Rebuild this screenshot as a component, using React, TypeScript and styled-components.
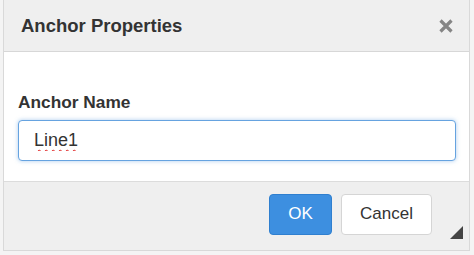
import React, { FC, useState } from "react";
import styled, { createGlobalStyle } from "styled-components";

const GlobalStyle = createGlobalStyle`
  html, body {
    margin: 0;
    padding: 0;
    background: #f4f4f4;
  }
  body {
    font-family: "Liberation Sans", Arial, sans-serif;
  }
`;

const Dialog = styled.div`
  width: 467px;
  height: 251px;
  margin-left: 3px;
  border: 1px solid #d9d9d9;
  border-top: none;
  box-sizing: border-box;
  display: flex;
  flex-direction: column;
  background: #fff;
`;

const Header = styled.div`
  height: 50px;
  flex-shrink: 0;
  display: flex;
  align-items: center;
  justify-content: space-between;
  padding: 1px 14px 0 17px;
  background: #efefef;
  border-bottom: 1px solid #d7d7d7;
`;

const Title = styled.h3`
  margin: 0;
  font-size: 18.5px;
  font-weight: bold;
  color: #333;
`;

const CloseButton = styled.button`
  border: none;
  background: none;
  padding: 0;
  width: 18px;
  height: 18px;
  display: flex;
  align-items: center;
  justify-content: center;
  cursor: pointer;
`;

const Body = styled.div`
  flex: 1;
  padding: 40px 13px 0 14px;
  background: #fff;
`;

const Label = styled.label`
  display: block;
  font-size: 17.3px;
  font-weight: bold;
  color: #333;
  margin-bottom: 7px;
`;

const Input = styled.input`
  display: block;
  width: 100%;
  height: 41px;
  box-sizing: border-box;
  border: 1px solid #66a3e0;
  border-radius: 4px;
  box-shadow: 0 0 4px rgba(102, 163, 224, 0.55);
  padding: 0 15px;
  font-family: "Liberation Sans", Arial, sans-serif;
  font-size: 18px;
  color: #333;
  outline: none;
  text-decoration: underline wavy #e02020;
  text-decoration-thickness: 1px;
  text-underline-offset: 3px;
`;

const Footer = styled.div`
  height: 64px;
  flex-shrink: 0;
  display: flex;
  align-items: center;
  justify-content: flex-end;
  gap: 9px;
  padding: 0 37px 4px 0;
  background: #efefef;
  border-top: 1px solid #dcdcdc;
  position: relative;
`;

const Button = styled.button<{ $primary?: boolean }>`
  height: 41px;
  padding: 0 18px;
  border-radius: 4px;
  font-family: "Liberation Sans", Arial, sans-serif;
  font-size: 17px;
  cursor: pointer;
  border: 1px solid ${p => (p.$primary ? "#2f7fcf" : "#d5d5d5")};
  background: ${p => (p.$primary ? "#3d8fe0" : "#fff")};
  color: ${p => (p.$primary ? "#fff" : "#333")};
  min-width: ${p => (p.$primary ? "63px" : "90px")};
`;

const ResizeGrip = styled.div`
  position: absolute;
  right: 6px;
  bottom: 11px;
  width: 0;
  height: 0;
  border-left: 13px solid transparent;
  border-bottom: 13px solid #444;
`;

const App: FC = () => {
  const [name, setName] = useState("Line1");

  return (
    <>
      <GlobalStyle />
      <Dialog>
        <Header>
          <Title>Anchor Properties</Title>
          <CloseButton aria-label="Close">
            <svg width="16" height="16" viewBox="0 0 16 16">
              <path
                d="M2.5 2.5 L13.5 13.5 M13.5 2.5 L2.5 13.5"
                stroke="#858585"
                strokeWidth="3.2"
                strokeLinecap="butt"
              />
            </svg>
          </CloseButton>
        </Header>
        <Body>
          <Label htmlFor="anchor-name">Anchor Name</Label>
          <Input
            id="anchor-name"
            value={name}
            onChange={e => setName(e.target.value)}
          />
        </Body>
        <Footer>
          <Button $primary>OK</Button>
          <Button>Cancel</Button>
          <ResizeGrip />
        </Footer>
      </Dialog>
    </>
  );
};

export default App;
